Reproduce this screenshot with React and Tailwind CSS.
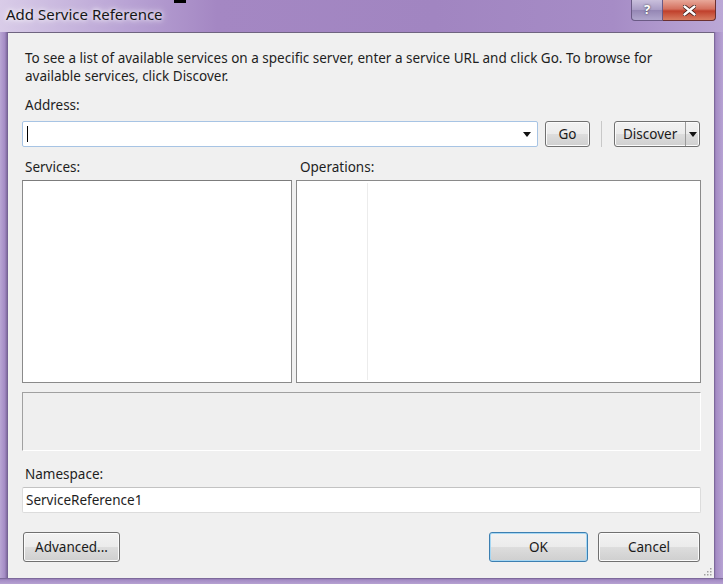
import { ChevronDown } from 'lucide-react';

const font = { fontFamily: '"Noto Sans", "Open Sans", sans-serif' };

// Win7-style push button face
function PushButton({ children, className = '', primary = false }) {
    return (
        <div
            className={`flex items-center justify-center rounded-[3px] border text-[#1a1a1a] ${primary
                ? 'border-[#3c7fb1] shadow-[inset_0_0_0_1px_#a6d7f3]'
                : 'border-[#707070] shadow-[inset_0_0_0_1px_#fbfbfb]'
                } bg-[linear-gradient(#f2f2f2_0%,#ebebeb_50%,#dddddd_51%,#cfcfcf_100%)] ${className}`}
        >
            {children}
        </div>
    );
}

function Caret() {
    return (
        <svg width="8" height="5" viewBox="0 0 8 5">
            <path d="M0 0h8L4 5z" fill="#111" />
        </svg>
    );
}

export default function App() {
    return (
        <div className="relative w-[723px] h-[584px] overflow-hidden flex flex-col bg-[#a68dc6]" style={font}>
            {/* title bar */}
            <div className="relative h-[32px] shrink-0 bg-[linear-gradient(90deg,#d9cce8_0%,#b8a2d4_18%,#a487c3_30%,#a185c1_60%,#a68cc6_85%,#bba8d6_100%)] flex items-start">
                <span className="pl-[6px] pt-[4px] text-[15px] leading-[20px] text-[#161616] [text-shadow:0_0_8px_#ffffff,0_0_4px_#ffffff]">
                    Add Service Reference
                </span>
                <div className="absolute left-[174px] top-0 w-[12px] h-[3px] bg-black" />
                <div className="absolute right-[7px] top-0 flex h-[21px]">
                    <div className="w-[32px] h-full rounded-bl-[4px] border border-t-0 border-[#6a5a85] bg-[linear-gradient(#c9bfdc_0%,#a89bc4_50%,#9486b4_51%,#b0a6cc_100%)] flex items-center justify-center text-[13px] font-bold text-white [text-shadow:0_0_2px_#333]">
                        ?
                    </div>
                    <div className="w-[53px] h-full rounded-br-[4px] border border-t-0 border-l-0 border-[#6a3030] bg-[linear-gradient(#e8a89a_0%,#d4705e_45%,#c0402c_55%,#d87c60_100%)] flex items-center justify-center">
                        <svg width="13" height="11" viewBox="0 0 13 11">
                            <path d="M1.5 1.5l10 8M11.5 1.5l-10 8" stroke="#3a1a18" strokeWidth="4" strokeLinecap="round" />
                            <path d="M1.5 1.5l10 8M11.5 1.5l-10 8" stroke="#ffffff" strokeWidth="2.4" strokeLinecap="round" />
                        </svg>
                    </div>
                </div>
            </div>

            <div className="flex flex-1 min-h-0">
                <div className="w-[8px] shrink-0 bg-[linear-gradient(90deg,#b9a6d4,#a48bc4_60%,#6e5c8c_100%)]" />

                {/* dialog body */}
                <div className="relative flex-1 flex flex-col bg-[#f0f0f0] border-t border-[#6f6480] pl-[14px] pr-[13px] text-[13.5px] leading-[18px] text-[#1e1e1e]">
                    <p className="mt-[16px] pl-[3px]">
                        To see a list of available services on a specific server, enter a service URL and click Go. To browse for
                        <br />
                        available services, click Discover.
                    </p>

                    <div className="mt-[11px] pl-[3px]">Address:</div>

                    <div className="mt-[7px] flex items-center h-[26px]">
                        <div className="w-[516px] h-full flex items-center bg-white border border-[#a7c4e4] rounded-[2px]">
                            <div className="ml-[4px] w-px h-[16px] bg-black" />
                            <div className="ml-auto mr-[6px]">
                                <Caret />
                            </div>
                        </div>
                        <PushButton className="ml-[7px] w-[45px] h-full">Go</PushButton>
                        <div className="ml-[11px] w-px h-full bg-[#c8c8c8]" />
                        <PushButton className="ml-[12px] w-[86px] h-full !justify-start">
                            <span className="pl-[8px] w-[70px]">Discover</span>
                            <div className="w-px h-full bg-[#9a9a9a]" />
                            <div className="flex-1 flex justify-center">
                                <Caret />
                            </div>
                        </PushButton>
                    </div>

                    <div className="mt-[11px] flex">
                        <span className="w-[274px] pl-[3px]">Services:</span>
                        <span className="pl-[4px]">Operations:</span>
                    </div>

                    <div className="mt-[4px] flex gap-[4px] h-[203px]">
                        <div className="w-[270px] h-full bg-white border border-[#8a8a8a] border-t-[#7c7c7c]" />
                        <div className="flex-1 h-full bg-white border border-[#8a8a8a] flex p-[2px]">
                            <div className="w-[69px] h-full border-r border-[#ececec]" />
                        </div>
                    </div>

                    <div className="mt-[9px] h-[59px] bg-[#efefef] border border-[#a0a0a0] border-r-white border-b-white" />

                    <div className="mt-[14px] pl-[3px]">Namespace:</div>

                    <div className="mt-[4px] h-[26px] flex items-center bg-white border border-[#dcdcdc] border-t-[#c2c2c2] rounded-[2px] pl-[3px]">
                        ServiceReference1
                    </div>

                    <div className="mt-[19px] flex h-[30px]">
                        <PushButton className="ml-[1px] w-[97px] h-full">Advanced...</PushButton>
                        <PushButton primary className="ml-auto w-[99px] h-full">OK</PushButton>
                        <PushButton className="ml-[10px] mr-[1px] w-[102px] h-full">Cancel</PushButton>
                    </div>

                    {/* size grip */}
                    <svg className="absolute right-[2px] bottom-[2px]" width="10" height="10" viewBox="0 0 10 10">
                        {[[8, 2], [8, 5], [5, 5], [8, 8], [5, 8], [2, 8]].map(([x, y]) => (
                            <rect key={`${x}-${y}`} x={x} y={y} width="1.5" height="1.5" fill="#a0a0a0" />
                        ))}
                    </svg>
                </div>

                <div className="w-[9px] shrink-0 bg-[linear-gradient(90deg,#6e5c8c_0%,#a48bc4_20%,#b7a3d3_100%)]" />
            </div>
            <div className="h-[6px] shrink-0 bg-[linear-gradient(#6e5c8c_0%,#a48bc4_30%,#b6a2d2_100%)]" />
        </div>
    );
}
